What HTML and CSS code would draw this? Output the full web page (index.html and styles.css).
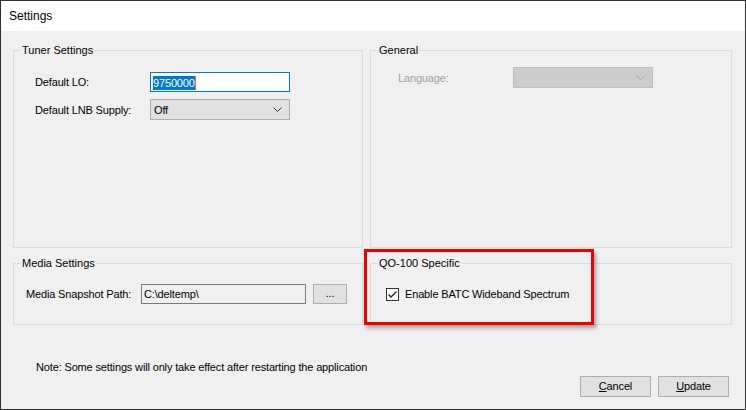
FILE: index.html
```html
<!DOCTYPE html>
<html>
<head>
<meta charset="utf-8">
<link rel="stylesheet" href="styles.css">
</head>
<body>
<div class="window">
  <div class="titlebar">Settings</div>
  <div class="client">
    <div class="groups">
      <fieldset class="group">
        <legend>Tuner Settings</legend>
        <div class="form tuner-form">
          <span class="label">Default LO:</span>
          <div class="textbox focused"><span class="sel">9750000</span><span class="caret"></span></div>
          <span class="label">Default LNB Supply:</span>
          <div class="combo"><span>Off</span><svg class="chev" width="9" height="5" viewBox="0 0 9 5"><polyline points="0.5,0.5 4.5,4.5 8.5,0.5" fill="none" stroke="#333" stroke-width="1"/></svg></div>
        </div>
      </fieldset>
      <fieldset class="group">
        <legend>General</legend>
        <div class="form general-form">
          <span class="label disabled">Language:</span>
          <div class="combo combo-disabled"><span></span><svg class="chev" width="9" height="5" viewBox="0 0 9 5"><polyline points="0.5,0.5 4.5,4.5 8.5,0.5" fill="none" stroke="#a8a8a8" stroke-width="1"/></svg></div>
        </div>
      </fieldset>
      <fieldset class="group">
        <legend>Media Settings</legend>
        <div class="media-row">
          <span class="label">Media Snapshot Path:</span>
          <div class="textbox readonly">C:\deltemp\</div>
          <div class="btn small">...</div>
        </div>
      </fieldset>
      <fieldset class="group">
        <legend>QO-100 Specific</legend>
        <div class="check-row">
          <span class="checkbox"><svg width="11" height="11" viewBox="0 0 11 11"><polyline points="1.5,5.5 4,8 9.5,2.5" fill="none" stroke="#222" stroke-width="1.3"/></svg></span>
          <span class="label">Enable BATC Wideband Spectrum</span>
        </div>
      </fieldset>
    </div>
    <div class="note">Note: Some settings will only take effect after restarting the application</div>
    <div class="buttons">
      <div class="btn"><u>C</u>ancel</div>
      <div class="btn"><u>U</u>pdate</div>
    </div>
    <div class="highlight"></div>
  </div>
</div>
</body>
</html>
```

FILE: styles.css
```css
html, body {
  margin: 0;
  padding: 0;
  background: #f0f0f0;
}
.window {
  width: 744px;
  height: 408px;
  border: 1px solid #2e2e2e;
  background: #f0f0f0;
  font-family: "Liberation Sans", Arial, sans-serif;
  font-size: 11px;
  color: #000;
  display: flex;
  flex-direction: column;
}
.titlebar {
  height: 30px;
  background: #fff;
  font-size: 12px;
  line-height: 30px;
  padding-left: 8px;
  flex: none;
}
.client {
  position: relative;
  flex: 1;
  padding: 12px 0 0 12px;
  letter-spacing: -0.15px;
}
.groups {
  display: grid;
  grid-template-columns: 350px 362px;
  grid-template-rows: 205px 69px;
  column-gap: 7px;
  row-gap: 8px;
}
.group {
  margin: 0;
  padding: 0;
  min-width: 0;
  border: 1px solid #dcdcdc;
}
.group legend {
  margin-left: 7px;
  padding: 0 1px 0 1px;
  line-height: 14px;
  font-size: 11px;
  letter-spacing: 0;
}
.label {
  line-height: 20px;
  white-space: nowrap;
}
.label.disabled {
  color: #a0a0a0;
}
.form {
  display: grid;
  grid-template-columns: 115px 140px;
  row-gap: 7px;
  align-items: center;
}
.tuner-form {
  padding: 15px 0 0 21px;
}
.general-form {
  padding: 10px 0 0 27px;
}
.textbox {
  box-sizing: border-box;
  height: 20px;
  border: 1px solid #7a7a7a;
  background: #fff;
  line-height: 18px;
  padding-left: 2px;
  white-space: nowrap;
}
.textbox.focused {
  border-color: #0078d7;
}
.textbox .sel {
  background: #0078d7;
  color: #fff;
  display: inline-block;
  line-height: 14px;
  vertical-align: middle;
}
.textbox .caret {
  display: inline-block;
  width: 1px;
  height: 14px;
  background: #e07020;
  vertical-align: middle;
}
.textbox.readonly {
  background: #f0f0f0;
  width: 165px;
}
.combo {
  box-sizing: border-box;
  height: 21px;
  border: 1px solid #adadad;
  background: #e1e1e1;
  display: flex;
  align-items: center;
  justify-content: space-between;
  padding: 0 7px 0 3px;
}
.combo-disabled {
  background: #cccccc;
  border-color: #bfbfbf;
  height: 21px;
}
.media-row {
  display: flex;
  align-items: center;
  padding: 14px 0 0 12px;
}
.media-row .label {
  width: 115px;
}
.btn {
  box-sizing: border-box;
  width: 71px;
  height: 21px;
  border: 1px solid #adadad;
  background: #e1e1e1;
  text-align: center;
  line-height: 19px;
}
.btn.small {
  width: 34px;
  height: 20px;
  margin-left: 7px;
  line-height: 17px;
}
.check-row {
  display: flex;
  align-items: center;
  padding: 14px 0 0 15px;
}
.checkbox {
  box-sizing: border-box;
  width: 13px;
  height: 13px;
  border: 1px solid #333;
  background: #fff;
  display: inline-flex;
  margin-right: 6px;
}
.note {
  padding: 35px 0 0 23px;
  line-height: 14px;
}
.buttons {
  display: flex;
  justify-content: flex-end;
  gap: 7px;
  padding: 2px 16px 0 0;
}
.highlight {
  position: absolute;
  left: 363px;
  top: 218px;
  width: 224px;
  height: 70px;
  border: 3px solid #ee0000;
  box-shadow: 2px 3px 4px rgba(0, 0, 0, 0.35);
  pointer-events: none;
}
```
